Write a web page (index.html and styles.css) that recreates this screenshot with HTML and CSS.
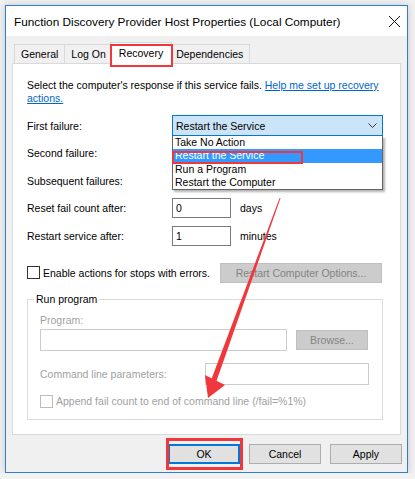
FILE: index.html
```html
<!DOCTYPE html>
<html lang="en">
<head>
    <meta charset="UTF-8">
    <meta name="viewport" content="width=device-width, initial-scale=1.0">
    <title>Function Discovery Provider Host Properties</title>
    <link rel="stylesheet" href="styles.css">
</head>
<body>
    <div class="window">
        <!-- Barra de título (la X se dibuja en el fondo de la barra) -->
        <div class="titlebar">
            <span class="title">Function Discovery Provider Host Properties (Local Computer)</span>
        </div>

        <div class="dialog">
            <!-- Pestañas -->
            <div class="tabs">
                <div class="tab">General</div>
                <div class="tab">Log On</div>
                <div class="tab active">Recovery</div>
                <div class="tab">Dependencies</div>
            </div>

            <div class="panel">
                <p class="intro">Select the computer's response if this service fails. <a href="#">Help me set up recovery</a><br><a href="#">actions.</a></p>

                <div class="failures">
                    <label>First failure:</label>
                    <div class="combo-cell">
                        <div class="combo">
                            <span>Restart the Service</span>
                            <svg width="9" height="5" viewBox="0 0 9 5">
                                <path d="M0.5 0.5 L4.5 4.5 L8.5 0.5" stroke="#333" stroke-width="1" fill="none"/>
                            </svg>
                        </div>
                        <ul class="dropdown">
                            <li>Take No Action</li>
                            <li class="selected">Restart the Service<span class="annot"></span></li>
                            <li>Run a Program</li>
                            <li>Restart the Computer</li>
                        </ul>
                    </div>

                    <label>Second failure:</label>
                    <div></div>

                    <label>Subsequent failures:</label>
                    <div></div>

                    <label>Reset fail count after:</label>
                    <div class="field"><input type="text" value="0"><span>days</span></div>

                    <label>Restart service after:</label>
                    <div class="field"><input type="text" value="1"><span>minutes</span></div>
                </div>

                <div class="stop-row">
                    <label class="check"><span class="box"></span>Enable actions for stops with errors.</label>
                    <button class="wide" disabled>Restart Computer Options...</button>
                </div>

                <!-- Programa a ejecutar -->
                <fieldset class="run">
                    <legend>Run program</legend>
                    <div class="muted">Program:</div>
                    <div class="program-row">
                        <input type="text" class="program-input" disabled>
                        <button disabled>Browse...</button>
                    </div>
                    <div class="cmd-row">
                        <span class="muted">Command line parameters:</span>
                        <input type="text" class="cmd-input" disabled>
                    </div>
                    <label class="check append"><span class="box"></span>Append fail count to end of command line (/fail=%1%)</label>
                </fieldset>
            </div>

            <div class="buttons">
                <button class="ok">OK</button>
                <button>Cancel</button>
                <button>Apply</button>
            </div>
        </div>
    </div>

    <!-- Flecha roja -->
    <svg class="arrow" width="415" height="479" viewBox="0 0 415 479">
        <polygon points="279.6,198 280.6,198 216.5,381 211.5,379" fill="#f0383c"/>
        <polygon points="205,375 225,385 208,398" fill="#f0383c"/>
    </svg>
</body>
</html>
```

FILE: styles.css
```css
body {
    margin: 0;
    background-color: #f2f2f2;
    font-family: "Liberation Sans", Arial, sans-serif;
    font-size: 10.5px;
    color: #000;
}

.window {
    margin: 5px 0 0 5px;
    width: 401px;
    height: 466px;
    border: 1px solid #2b7fd4;
    background-color: #f0f0f0;
    box-shadow: 0 0 8px rgba(0, 0, 0, 0.18);
}

/* Barra de título */
.titlebar {
    height: 30px;
    box-sizing: border-box;
    padding: 2px 30px 0 8px;
    line-height: 28px;
    background-color: #fff;
    background-image:
        linear-gradient(45deg, transparent calc(50% - 0.6px), #111 calc(50% - 0.6px), #111 calc(50% + 0.6px), transparent calc(50% + 0.6px)),
        linear-gradient(-45deg, transparent calc(50% - 0.6px), #111 calc(50% - 0.6px), #111 calc(50% + 0.6px), transparent calc(50% + 0.6px));
    background-size: 11px 11px;
    background-position: right 7px top 10px;
    background-repeat: no-repeat;
}

.title {
    font-size: 11.8px;
    white-space: nowrap;
}

.dialog {
    padding: 6px 6px 0;
}

/* Pestañas */
.tabs {
    display: flex;
    align-items: flex-end;
    height: 21px;
    padding-left: 3px;
}

.tab {
    box-sizing: border-box;
    height: 19px;
    line-height: 19px;
    padding: 0 6px;
    margin-left: -1px;
    border: 1px solid #d9d9d9;
    border-bottom: none;
    background-color: #f0f0f0;
}

.tab.active {
    position: relative;
    z-index: 1;
    height: 22px;
    line-height: 20px;
    margin: 0 -2px -1px -3px;
    padding: 0 8px;
    background-color: #fff;
}

.tab.active::after {
    content: "";
    position: absolute;
    top: 1px;
    right: -2px;
    bottom: -3px;
    left: -1px;
    border: 2px solid #f0383c;
}

.panel {
    box-sizing: border-box;
    height: 372px;
    border: 1px solid #d9d9d9;
    background-color: #fff;
    padding: 15px 17px 0 14px;
}

.intro {
    margin: 0;
    line-height: 13px;
    white-space: nowrap;
}

.intro a {
    color: #0066cc;
}

/* Filas de fallos */
.failures {
    display: grid;
    grid-template-columns: 145px 211px;
    grid-auto-rows: 21px;
    row-gap: 6.5px;
    align-items: center;
    margin-top: 10px;
}

.combo-cell {
    position: relative;
    height: 21px;
}

.combo {
    box-sizing: border-box;
    height: 21px;
    border: 1px solid #0078d7;
    background-color: #cce4f7;
    display: flex;
    align-items: center;
    justify-content: space-between;
    padding: 0 5px 0 3px;
}

.dropdown {
    position: absolute;
    top: 21px;
    left: 0;
    z-index: 2;
    box-sizing: border-box;
    width: 211px;
    margin: 0;
    padding: 0;
    list-style: none;
    background-color: #fff;
    border: 1px solid #646464;
    border-top: none;
    box-shadow: 2px 2px 2px rgba(0, 0, 0, 0.3);
}

.dropdown li {
    line-height: 13.25px;
    padding-left: 2px;
    white-space: nowrap;
}

.dropdown li.selected {
    position: relative;
    background-color: #3399ff;
    color: #fff;
}

.annot {
    position: absolute;
    top: 1.5px;
    left: -1px;
    width: 131px;
    height: 13px;
    box-sizing: border-box;
    border: 2px solid #f0383c;
}

.field {
    display: flex;
    align-items: center;
    gap: 9px;
}

input {
    font: inherit;
    box-sizing: border-box;
    height: 20px;
    margin: 0;
    padding: 0 3px;
    border: 1px solid #7a7a7a;
    background-color: #fff;
    outline: none;
}

.field input {
    width: 59px;
}

button {
    font: inherit;
    box-sizing: border-box;
    width: 72px;
    height: 20px;
    margin: 0;
    padding: 0;
    background-color: #e1e1e1;
    border: 1px solid #adadad;
    color: #000;
}

button:disabled {
    background-color: #cccccc;
    border-color: #bfbfbf;
    color: #838383;
}

/* Casillas */
.check {
    display: flex;
    align-items: center;
    gap: 3px;
}

.box {
    box-sizing: border-box;
    width: 13px;
    height: 13px;
    border: 1px solid #333;
    background-color: #fff;
}

.stop-row {
    display: flex;
    align-items: center;
    height: 20px;
    margin-top: 16.5px;
}

.stop-row .wide {
    width: 162px;
    margin-left: auto;
    margin-right: 1px;
}

/* Grupo Run program */
.run {
    margin: 10px 0 0;
    padding: 8px 13px 11px 12px;
    border: 1px solid #dcdcdc;
    min-width: 0;
}

.run legend {
    padding: 0 2px;
    margin-left: -6px;
    line-height: 13px;
}

.muted, .append {
    color: #a0a0a0;
    line-height: 13px;
}

.run input {
    height: 22px;
    border-color: #cccccc;
}

.program-row {
    display: flex;
    align-items: center;
    gap: 9px;
    margin-top: 2.5px;
}

.program-input {
    width: 247px;
}

.cmd-row {
    display: flex;
    align-items: center;
    justify-content: space-between;
    margin-top: 12px;
}

.cmd-input {
    width: 164px;
}

.append {
    margin-top: 10px;
}

.append .box {
    border-color: #bcbcbc;
}

/* Botones inferiores */
.buttons {
    display: flex;
    justify-content: flex-end;
    gap: 9px;
    margin: 9px -1px 0 0;
}

.ok {
    position: relative;
    border: 2px solid #0078d7;
}

.ok::after {
    content: "";
    position: absolute;
    top: -8px;
    right: -5px;
    bottom: -8px;
    left: -4px;
    border: 3px solid #f0383c;
}

.arrow {
    position: absolute;
    top: 0;
    left: 0;
    pointer-events: none;
}
```
